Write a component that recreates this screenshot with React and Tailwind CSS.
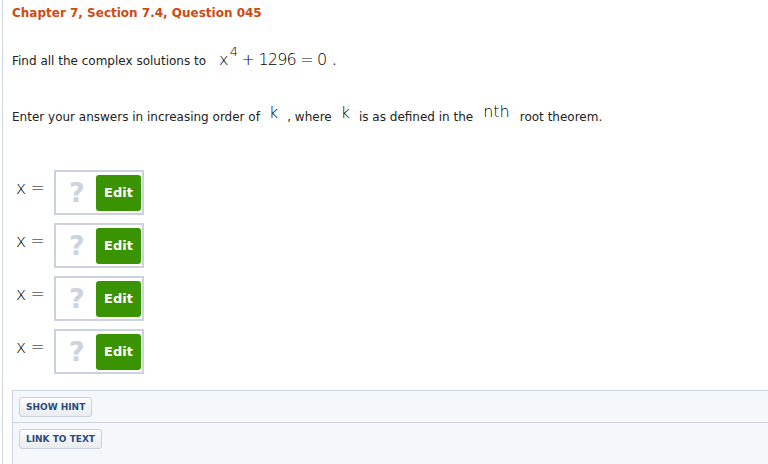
const answers = [1, 2, 3, 4];

function AnswerRow() {
  return (
    <div className="flex items-start">
      <div className="w-[42px] pl-[4px] pt-[8px] text-[17px] leading-[20px] tracking-[-0.5px] font-['DejaVu_Sans',sans-serif] font-extralight text-black">
        x =
      </div>
      <div className="flex h-[45px] w-[90px] items-center border-2 border-[#ccd3de] bg-white pl-[13px]">
        <span className="w-[27px] text-[27px] font-bold leading-none text-[#cdd3dd] font-['DejaVu_Sans',sans-serif]">?</span>
        <button className="flex h-[36px] w-[45px] items-center justify-center rounded-[3px] bg-[#3a9300] text-[13px] font-bold text-white font-['DejaVu_Sans',sans-serif]">
          Edit
        </button>
      </div>
    </div>
  );
}

function PanelButton({ children }) {
  return (
    <button className="h-[20px] rounded-[3px] border border-[#c9d1dc] bg-gradient-to-b from-[#fbfcfd] to-[#e9edf1] px-[6px] text-[9px] font-bold leading-[18px] text-[#2b4a7c] font-['DejaVu_Sans',sans-serif]">
      {children}
    </button>
  );
}

export default function App() {
  return (
    <div className="h-[464px] w-[768px] overflow-hidden bg-white font-['DejaVu_Sans',Verdana,sans-serif] text-[12px] text-[#222]">
      <div className="ml-[2px] flex h-full flex-col border-l border-[#cfd6e0] pl-[9px]">
        <h1 className="pt-[5px] text-[12px] font-bold leading-[16px] text-[#cf4a10]">
          Chapter 7, Section 7.4, Question 045
        </h1>

        <p className="mt-[17px] leading-[28px]">
          Find all the complex solutions to
          <span className="ml-[13px] font-['DejaVu_Sans',sans-serif] font-extralight text-[16px] tracking-[-0.8px] text-black">
            x<span className="ml-[2px] align-[9px] text-[13px]">4</span> + 1296 = 0
          </span>
          <span className="ml-[6px]">.</span>
        </p>

        <p className="mt-[23px] leading-[28px]">
          Enter your answers in increasing order of
          <span className="mx-[9px] align-[3px] font-['DejaVu_Sans',sans-serif] font-extralight text-[16px] text-black">k</span>
          , where
          <span className="mx-[9px] align-[3px] font-['DejaVu_Sans',sans-serif] font-extralight text-[16px] text-black">k</span>
          is as defined in the
          <span className="mx-[10px] align-[4px] font-['DejaVu_Sans',sans-serif] font-extralight text-[16px] text-black">nth</span>
          root theorem.
        </p>

        <div className="mt-[39px] flex flex-col gap-[8px]">
          {answers.map((n) => (
            <AnswerRow key={n} />
          ))}
        </div>

        <div className="mt-[16px] flex-1 border-l border-t border-[#cdd3e0] bg-[#f5f8fb]">
          <div className="border-b border-[#cdd3e0] px-[6px] pb-[5px] pt-[6px]">
            <PanelButton>SHOW HINT</PanelButton>
          </div>
          <div className="px-[6px] pt-[6px]">
            <PanelButton>LINK TO TEXT</PanelButton>
          </div>
        </div>
      </div>
    </div>
  );
}
